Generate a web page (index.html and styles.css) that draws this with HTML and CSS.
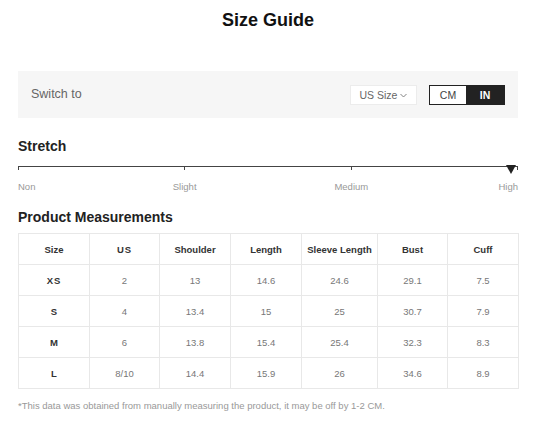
FILE: index.html
```html
<!DOCTYPE html>
<html>
<head>
<meta charset="utf-8">
<link rel="stylesheet" href="styles.css">
</head>
<body>
<div class="page">
  <h1 class="title">Size Guide</h1>

  <div class="switch">
    <span class="switch-label">Switch to</span>
    <div class="select">US Size
      <svg class="chev" width="7" height="5" viewBox="0 0 7 5"><path d="M0.5 1 L3.5 4 L6.5 1" fill="none" stroke="#777" stroke-width="0.9"/></svg>
    </div>
    <div class="units">
      <span class="unit cm">CM</span>
      <span class="unit in">IN</span>
    </div>
  </div>

  <h2 class="heading stretch-h">Stretch</h2>
  <div class="track">
    <span class="seg"></span><span class="seg"></span><span class="seg"></span>
    <span class="marker"></span>
  </div>
  <div class="labels">
    <span class="lab l-left">Non</span>
    <span class="lab l-mid">Slight</span>
    <span class="lab l-mid">Medium</span>
    <span class="lab l-right">High</span>
  </div>

  <h2 class="heading meas-h">Product Measurements</h2>
  <table class="sizes">
    <colgroup>
      <col class="c71"><col class="c70"><col class="c71"><col class="c71"><col class="c76"><col class="c70"><col class="c71">
    </colgroup>
    <thead>
      <tr><th>Size</th><th class="sp">US</th><th>Shoulder</th><th>Length</th><th>Sleeve Length</th><th>Bust</th><th>Cuff</th></tr>
    </thead>
    <tbody>
      <tr><th class="sp">XS</th><td>2</td><td>13</td><td>14.6</td><td>24.6</td><td>29.1</td><td>7.5</td></tr>
      <tr><th>S</th><td>4</td><td>13.4</td><td>15</td><td>25</td><td>30.7</td><td>7.9</td></tr>
      <tr><th>M</th><td>6</td><td>13.8</td><td>15.4</td><td>25.4</td><td>32.3</td><td>8.3</td></tr>
      <tr><th>L</th><td>8/10</td><td>14.4</td><td>15.9</td><td>26</td><td>34.6</td><td>8.9</td></tr>
    </tbody>
  </table>
  <p class="note">*This data was obtained from manually measuring the product, it may be off by 1-2 CM.</p>
</div>
</body>
</html>
```

FILE: styles.css
```css
* { box-sizing: border-box; }
html, body { margin: 0; padding: 0; background: #fff; }
body { font-family: "Liberation Sans", Arial, sans-serif; color: #222; }

.page { width: 500px; margin-left: 18px; }

.title {
  margin: 10px 0 0;
  font-size: 18px;
  line-height: 20px;
  font-weight: bold;
  text-align: center;
  color: #111;
}

.switch {
  margin-top: 41px;
  height: 47px;
  background: #f6f6f6;
  display: flex;
  align-items: center;
  padding: 0 13px;
}
.switch-label { font-size: 12.5px; color: #666; flex: 1; margin-top: -1px; }
.select {
  width: 67px;
  height: 20px;
  background: #fff;
  border: 1px solid #ececec;
  font-size: 10.5px;
  color: #666;
  display: flex;
  align-items: center;
  justify-content: center;
  gap: 3px;
}
.chev { margin-top: 1px; }
.units {
  margin-left: 12px;
  display: flex;
  height: 20px;
  border: 1px solid #222;
}
.unit {
  display: flex;
  align-items: center;
  justify-content: center;
  font-size: 10.5px;
}
.cm { width: 36px; background: #fff; color: #444; }
.in { width: 38px; background: #222; color: #fff; font-weight: bold; }

.heading {
  margin: 0;
  font-size: 14px;
  line-height: 16px;
  font-weight: bold;
  color: #222;
}
.stretch-h { margin-top: 20px; }

.track {
  position: relative;
  margin-top: 12px;
  display: flex;
  border-top: 1px solid #444;
  border-right: 1px solid #444;
  height: 4px;
}
.seg { flex: 1; border-left: 1px solid #444; }
.marker {
  position: absolute;
  right: 1px;
  top: -2px;
  width: 0;
  height: 0;
  border-left: 5px solid transparent;
  border-right: 5px solid transparent;
  border-top: 9px solid #222;
}

.labels {
  margin-top: 11px;
  display: grid;
  grid-template-columns: 1fr 2fr 2fr 1fr;
  font-size: 9.5px;
  line-height: 12px;
  color: #999;
}
.l-left { text-align: left; }
.l-mid { text-align: center; }
.l-right { text-align: right; }

.meas-h { margin-top: 16px; }

.sizes {
  margin-top: 8px;
  width: 500px;
  table-layout: fixed;
  border-collapse: collapse;
}
.c71 { width: 71px; }
.c70 { width: 70px; }
.c76 { width: 76px; }
.sizes th, .sizes td {
  border: 1px solid #e8e8e8;
  height: 31px;
  padding: 0;
  text-align: center;
  font-size: 9.5px;
}
.sizes th { font-weight: bold; color: #333; }
.sizes td { color: #777; }
.sizes .sp { letter-spacing: 1px; }

.note {
  margin: 11px 0 0;
  font-size: 9.5px;
  line-height: 12px;
  color: #999;
}
```
